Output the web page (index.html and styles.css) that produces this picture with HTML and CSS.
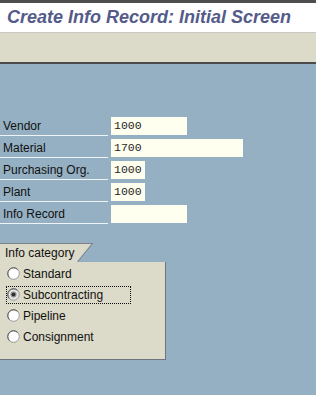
FILE: index.html
```html
<!DOCTYPE html>
<html>
<head>
<meta charset="utf-8">
<link rel="stylesheet" href="styles.css">
</head>
<body>

<div class="top-line"></div>
<div class="title-bar">
  <h1 class="title">Create Info Record: Initial Screen</h1>
</div>
<div class="tool-bar"></div>

<div class="screen">
  <div class="fields">
    <div class="field-row">
      <label class="field-label">Vendor</label>
      <div class="field-input w-76">1000</div>
    </div>
    <div class="field-row">
      <label class="field-label">Material</label>
      <div class="field-input w-132">1700</div>
    </div>
    <div class="field-row">
      <label class="field-label">Purchasing Org.</label>
      <div class="field-input w-34">1000</div>
    </div>
    <div class="field-row">
      <label class="field-label">Plant</label>
      <div class="field-input w-34">1000</div>
    </div>
    <div class="field-row">
      <label class="field-label">Info Record</label>
      <div class="field-input w-76"></div>
    </div>
  </div>

  <div class="group">
    <div class="group-tab">
      <div class="group-title">Info category</div>
      <svg class="group-slant" width="16" height="19" viewBox="0 0 16 19">
        <polygon points="0,0 15,0 0,18.5" fill="#dcdac8"/>
        <line x1="0" y1="0.5" x2="15.5" y2="0.5" stroke="#7c8288" stroke-width="1"/>
        <line x1="15.5" y1="0.5" x2="1" y2="18.5" stroke="#7c8288" stroke-width="1"/>
      </svg>
    </div>
    <div class="group-body">
      <div class="radio-row">
        <svg class="radio" width="13" height="13" viewBox="0 0 13 13">
          <circle cx="6.5" cy="6.5" r="5.8" fill="#fff" stroke="#9a9a9a" stroke-width="1"/>
          <path d="M2.4 10.6 A5.8 5.8 0 0 1 10.6 2.4" fill="none" stroke="#555" stroke-width="1"/>
        </svg>
        <span>Standard</span>
      </div>
      <div class="radio-row">
        <div class="focus">
          <svg class="radio" width="13" height="13" viewBox="0 0 13 13">
            <circle cx="6.5" cy="6.5" r="5.8" fill="#e4e4e4" stroke="#9a9a9a" stroke-width="1"/>
            <path d="M2.4 10.6 A5.8 5.8 0 0 1 10.6 2.4" fill="none" stroke="#555" stroke-width="1"/>
            <circle cx="6.5" cy="6.5" r="3" fill="#8a8a8a"/>
            <circle cx="6.5" cy="6.5" r="1.8" fill="#2a2a2a"/>
          </svg>
          <span>Subcontracting</span>
        </div>
      </div>
      <div class="radio-row">
        <svg class="radio" width="13" height="13" viewBox="0 0 13 13">
          <circle cx="6.5" cy="6.5" r="5.8" fill="#fff" stroke="#9a9a9a" stroke-width="1"/>
          <path d="M2.4 10.6 A5.8 5.8 0 0 1 10.6 2.4" fill="none" stroke="#555" stroke-width="1"/>
        </svg>
        <span>Pipeline</span>
      </div>
      <div class="radio-row">
        <svg class="radio" width="13" height="13" viewBox="0 0 13 13">
          <circle cx="6.5" cy="6.5" r="5.8" fill="#fff" stroke="#9a9a9a" stroke-width="1"/>
          <path d="M2.4 10.6 A5.8 5.8 0 0 1 10.6 2.4" fill="none" stroke="#555" stroke-width="1"/>
        </svg>
        <span>Consignment</span>
      </div>
    </div>
  </div>
</div>

</body>
</html>
```

FILE: styles.css
```css
html, body {
  margin: 0;
  padding: 0;
}

body {
  background-color: #94b0c2;
  font-family: "Liberation Sans", Arial, sans-serif;
  font-size: 12px;
  color: #111;
}

.top-line {
  height: 3px;
  background-color: #4e4e4e;
}

.title-bar {
  height: 29px;
  background-color: #ffffff;
  border-bottom: 1px solid #c9c9c4;
  padding-left: 7px;
}

.title {
  margin: 0;
  font-size: 18px;
  font-weight: bold;
  font-style: italic;
  line-height: 29px;
  color: #545b89;
}

.tool-bar {
  height: 29px;
  background-color: #dcdbc9;
  border-bottom: 2px solid #4b4b4b;
}

.screen {
  padding-top: 53px;
}

.fields {
  display: flex;
  flex-direction: column;
  gap: 3px;
}

.field-row {
  display: flex;
  gap: 3px;
}

.field-label {
  box-sizing: border-box;
  width: 108px;
  height: 19px;
  padding-left: 3px;
  line-height: 19px;
  border-bottom: 1px solid #eef3f5;
  color: #111;
}

.field-input {
  box-sizing: border-box;
  height: 18px;
  padding-left: 3px;
  background-color: #fffff0;
  font-family: "Liberation Mono", "Courier New", monospace;
  font-size: 11.5px;
  line-height: 18px;
  color: #1e1e1e;
}

.w-34 { width: 34px; }
.w-76 { width: 76px; }
.w-132 { width: 132px; }

.group {
  margin-top: 19px;
  width: 166px;
}

.group-tab {
  display: flex;
  height: 19px;
}

.group-title {
  box-sizing: border-box;
  width: 77px;
  height: 19px;
  padding-left: 5px;
  line-height: 18px;
  background-color: #dcdac8;
  border-top: 1px solid #7c8288;
  white-space: nowrap;
}

.group-slant {
  display: block;
}

.group-body {
  box-sizing: border-box;
  height: 98px;
  background-color: #dcdac8;
  border-right: 1px solid #6e757c;
  border-bottom: 1px solid #6e757c;
  padding-top: 1px;
}

.radio-row {
  display: flex;
  align-items: center;
  height: 21px;
  padding-left: 7px;
}

.radio {
  display: block;
  flex: none;
  margin-right: 3px;
}

.focus {
  display: flex;
  align-items: center;
  margin-left: -1px;
  padding-left: 0;
  width: 125px;
  height: 18px;
  box-sizing: border-box;
  border: 1px dotted #111;
}
```
